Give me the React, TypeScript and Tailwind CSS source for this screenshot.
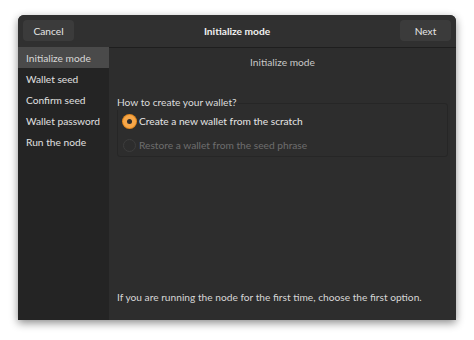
const steps = ["Initialize mode", "Wallet seed", "Confirm seed", "Wallet password", "Run the node"];

export default function App() {
  return (
    <div className="flex h-[340px] w-[474px] bg-white pl-[18px] pt-[15px] font-['Lato',sans-serif] text-[10.2px] leading-[16px] whitespace-nowrap">
      <div className="flex h-[305px] w-[438px] flex-col overflow-hidden rounded-t-[6px] bg-[#2d2d2d] shadow-[0_3px_9px_rgba(0,0,0,0.45)]">
        <div className="flex h-[33px] shrink-0 items-center justify-between border-b border-[#1e1e1e] bg-[#303030] px-[5px] pb-px">
          <button className="h-[21px] w-[51px] rounded-[4px] bg-[#3b3b3b] text-[#e6e6e6]">Cancel</button>
          <span className="font-bold text-[#f0f0f0]">Initialize mode</span>
          <button className="h-[21px] w-[51px] rounded-[4px] bg-[#3b3b3b] text-[#e6e6e6]">Next</button>
        </div>
        <div className="flex flex-1">
          <div className="-mt-px flex w-[91px] shrink-0 flex-col bg-[#242424]">
            {steps.map((s, i) => (
              <div
                key={s}
                className={`flex h-[21px] items-center px-[8px] ${i === 0 ? "bg-[#4a4a4a] text-[#d8d8d8]" : "text-[#e0e0e0]"}`}
              >
                {s}
              </div>
            ))}
          </div>
          <div className="flex flex-1 flex-col px-[8px] pb-[15px]">
            <div className="mt-[6px] text-center text-[#c8c8c8]">Initialize mode</div>
            <div className="relative mt-[33px] h-[54px] rounded-[3px] border border-[#262626]">
              <span className="absolute left-[-1px] top-[-10px] bg-[#2d2d2d] pr-px text-[#dcdcdc]">How to create your wallet?</span>
              <div className="mt-[9px] flex items-center gap-[3px] pl-[5px] text-[#e6e6e6]">
                <span className="flex h-[13px] w-[13px] items-center justify-center rounded-full bg-[#f6a74a] shadow-[0_0_0_1px_#e58a1f]">
                  <span className="h-[5px] w-[5px] rounded-full bg-[#2d2d2d]" />
                </span>
                Create a new wallet from the scratch
              </div>
              <div className="mt-[8px] flex items-center gap-[3px] pl-[5px] text-[#6e6e6e]">
                <span className="h-[13px] w-[13px] rounded-full border border-[#3d3d3d]" />
                Restore a wallet from the seed phrase
              </div>
            </div>
            <div className="mt-auto text-[#d6d6d6]">If you are running the node for the first time, choose the first option.</div>
          </div>
        </div>
      </div>
    </div>
  );
}
